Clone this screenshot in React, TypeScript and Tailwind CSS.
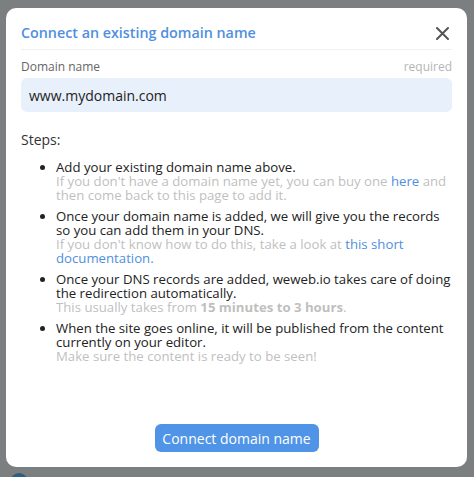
type Step = { main: string[]; hint: React.ReactNode[] };

const link = "text-[#4f8fde]";

const steps: Step[] = [
  {
    main: ["Add your existing domain name above."],
    hint: [
      <>
        If you don't have a domain name yet, you can buy one <span className={link}>here</span> and
      </>,
      "then come back to this page to add it.",
    ],
  },
  {
    main: ["Once your domain name is added, we will give you the records", "so you can add them in your DNS."],
    hint: [
      <>
        If you don't know how to do this, take a look at <span className={link}>this short</span>
      </>,
      <span className={link}>documentation.</span>,
    ],
  },
  {
    main: ["Once your DNS records are added, weweb.io takes care of doing", "the redirection automatically."],
    hint: [
      <>
        This usually takes from <b className="font-bold">15 minutes to 3 hours</b>.
      </>,
    ],
  },
  {
    main: ["When the site goes online, it will be published from the content", "currently on your editor."],
    hint: ["Make sure the content is ready to be seen!"],
  },
];

export default function App() {
  const font = { fontFamily: '"Open Sans", "Liberation Sans", sans-serif' };

  return (
    <div className="relative h-[477px] w-[474px] overflow-hidden bg-[#7b7f80] pl-[6px] pt-[8px]" style={font}>
      {/* avatar peeking from the page below the overlay */}
      <div className="absolute left-[10px] top-[473px] h-[18px] w-[18px] rounded-full bg-[#2f5d82]" />

      <div className="flex h-[459px] w-[461px] flex-col rounded-[10px] bg-white px-[15px]">
        {/* Header */}
        <div className="flex h-[42px] items-end justify-between border-b border-[#eef0f2] pb-[6px]">
          <h2 className="text-[14.3px] font-semibold leading-[20px] text-[#4f8fde]">
            Connect an existing domain name
          </h2>
          <svg width="13" height="13" viewBox="0 0 13 13" className="mb-[3px] mr-[3px]">
            <path d="M1 1L12 12M12 1L1 12" stroke="#555" strokeWidth="2" strokeLinecap="round" />
          </svg>
        </div>

        {/* Domain field */}
        <div className="mt-[9px] flex items-center justify-between text-[12px] leading-[16px]">
          <span className="text-[#666]">Domain name</span>
          <span className="text-[#b5b5b5]">required</span>
        </div>
        <div className="mt-[3px] flex h-[34px] items-center rounded-[6px] bg-[#e8f0fc] px-[8px] text-[14px] text-[#222]">
          www.mydomain.com
        </div>

        {/* Steps */}
        <p className="mt-[19px] text-[14px] leading-[18px] text-[#333]">Steps:</p>
        <ul className="mt-[11px] flex flex-col gap-[7px] pl-[35px] text-[13.2px] leading-[14px]">
          {steps.map((s, i) => (
            <li key={i} className="list-disc text-[#222]">
              {s.main.map((line, j) => (
                <span key={j} className="block whitespace-nowrap">
                  {line}
                </span>
              ))}
              {s.hint.map((line, j) => (
                <span key={j} className="block whitespace-nowrap text-[#bfbfbf]">
                  {line}
                </span>
              ))}
            </li>
          ))}
        </ul>

        <div className="mt-auto mb-[15px] flex justify-center">
          <button className="h-[28px] w-[164px] rounded-[6px] bg-[#4f94e6] text-[14px] text-white">
            Connect domain name
          </button>
        </div>
      </div>
    </div>
  );
}
